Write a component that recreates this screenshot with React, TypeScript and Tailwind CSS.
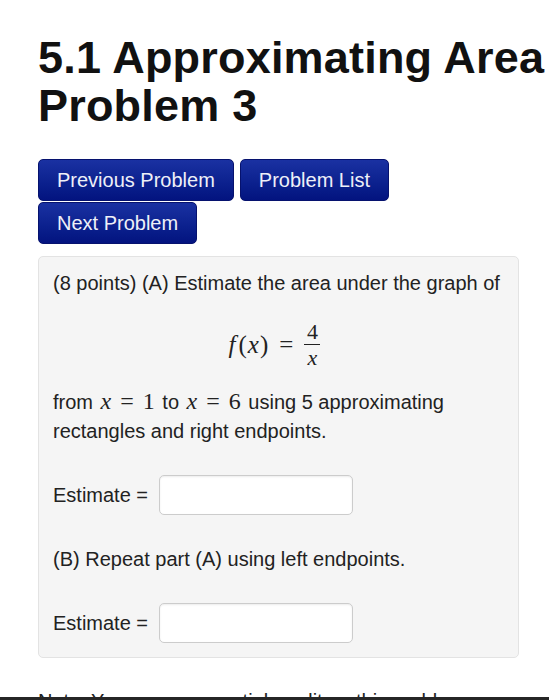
export default function App() {
  return (
    <div className="min-h-[700px] bg-white pl-[38px] pr-[30px] pt-[34px] text-[#222]" style={{ fontFamily: '"Liberation Sans", Arial, sans-serif' }}>
      <h1 className="whitespace-nowrap text-[45px] font-bold leading-[48px] tracking-[0.2px] text-[#111]">
        5.1 Approximating Area
        <br />
        Problem 3
      </h1>

      <div className="mt-[29px] flex flex-wrap gap-x-[6px] gap-y-px">
        <NavButton label="Previous Problem" />
        <NavButton label="Problem List" />
        <NavButton label="Next Problem" />
      </div>

      <div className="mt-[12px] rounded-[5px] border border-[#e3e3e3] bg-[#f5f5f5] px-[14px] pt-[12px] pb-[14px] text-[20px] leading-[29px]">
        <p>(8 points) (A) Estimate the area under the graph of</p>

        {/* display formula */}
        <div className="mt-[22px] flex h-[48px] items-center justify-center pr-[8px]" style={{ fontFamily: '"Liberation Serif", "Times New Roman", serif' }}>
          <span className="text-[25px] leading-none">
            <i>f</i>
            <span className="ml-[3px]">(</span>
            <i className="mx-px">x</i>
            <span>)</span>
          </span>
          <span className="mx-[11px] text-[25px] leading-none">=</span>
          <span className="flex flex-col items-center text-[22px] leading-[21px]">
            <span>4</span>
            <span className="my-[2px] h-px w-[16px] bg-[#222]" />
            <i>x</i>
          </span>
        </div>

        <p className="mt-[20px]">
          from <M>x</M>
          <S className="mx-[9px]">=</S>
          <S className="mr-[2px]">1</S> to <M>x</M>
          <S className="mx-[9px]">=</S>
          <S className="mr-[2px]">6</S> using 5 approximating rectangles and right endpoints.
        </p>

        <AnswerRow />

        <p className="mt-[30px]">(B) Repeat part (A) using left endpoints.</p>

        <AnswerRow />
      </div>

      <p className="mt-[29px] whitespace-nowrap text-[20px] leading-[29px]">Note: You can earn partial credit on this problem.</p>

      <div className="fixed inset-x-0 bottom-0 h-[3px] bg-[#262626]" />
    </div>
  );
}

function NavButton({ label }: { label: string }) {
  return (
    <button className="h-[42px] rounded-[5px] border border-[#06126e] bg-linear-to-b from-[#1a31a2] to-[#03137f] px-[18px] text-[20px] text-[#eef0f8]">
      {label}
    </button>
  );
}

function AnswerRow() {
  return (
    <div className="mt-[29px] flex items-center gap-[11px]">
      <span>Estimate =</span>
      <input
        type="text"
        className="h-[40px] w-[194px] rounded-[5px] border border-[#cccccc] bg-white px-2 shadow-[inset_0_1px_2px_rgba(0,0,0,0.08)] outline-none"
      />
    </div>
  );
}

function M({ children }: { children: React.ReactNode }) {
  return (
    <i className="ml-[2px] text-[24px] leading-none" style={{ fontFamily: '"Liberation Serif", "Times New Roman", serif' }}>
      {children}
    </i>
  );
}

function S({ children, className = "" }: { children: React.ReactNode; className?: string }) {
  return (
    <span className={`text-[24px] leading-none ${className}`} style={{ fontFamily: '"Liberation Serif", "Times New Roman", serif' }}>
      {children}
    </span>
  );
}
